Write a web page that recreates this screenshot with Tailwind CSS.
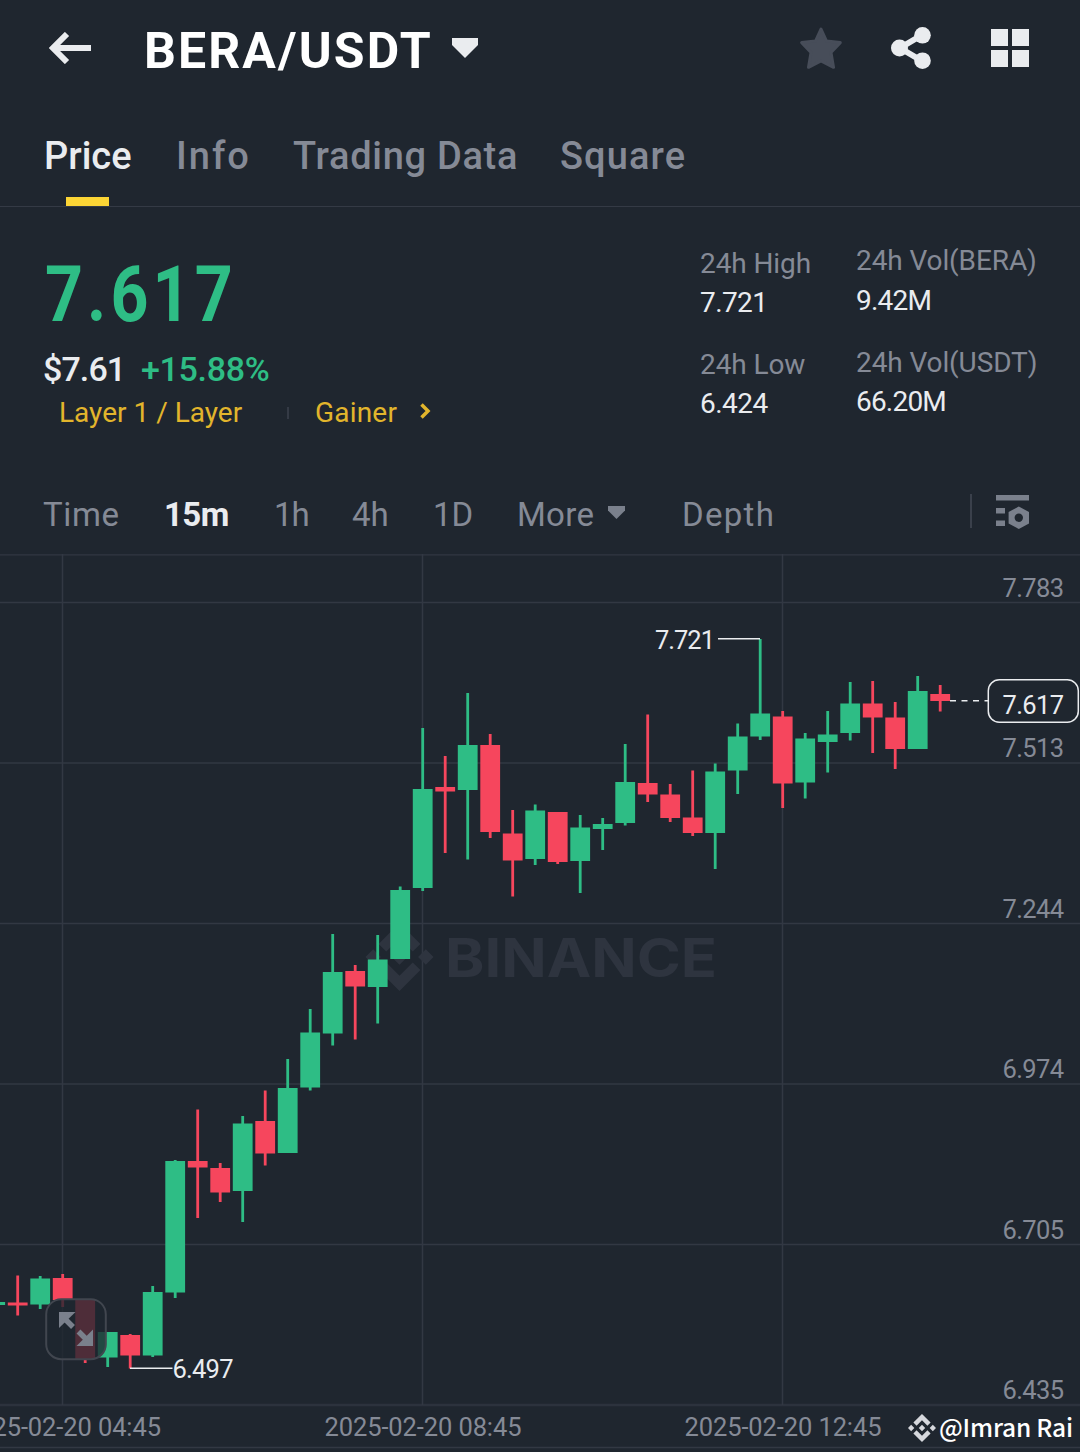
<!DOCTYPE html>
<html lang="en">
<head>
    <meta charset="UTF-8">
    <meta name="viewport" content="width=device-width, initial-scale=1.0">
    <title>BERA/USDT</title>
    <script src="https://cdn.jsdelivr.net/npm/@tailwindcss/browser@4"></script>
</head>
<body class="bg-[#1f262f] text-[#eaecef] font-['Roboto',sans-serif] w-[1080px] h-[1452px] overflow-hidden">

    <!-- Header -->
    <header class="h-24 flex items-center pl-[49px] pr-[51px]">
        <svg class="w-[42px] h-8" viewBox="0 0 42 32" fill="none" stroke="#eaecef" stroke-width="6">
            <path d="M18 2L4 16l14 14M4 16h38"/>
        </svg>
        <h1 class="ml-[53px] mt-1.5 w-[308px] text-[50px] leading-none font-bold text-white tracking-[2.1px] whitespace-nowrap">BERA/USDT</h1>
        <svg class="w-[26px] h-5" viewBox="0 0 26 20" fill="#eaecef">
            <path d="M0 0h26v7L13 20 0 7z"/>
        </svg>
        <div class="ml-auto flex items-center">
            <svg class="w-[42px] h-[42px]" viewBox="0 0 42 42" fill="#474d59" stroke="#474d59" stroke-width="3" stroke-linejoin="round">
                <path d="M21 2l5.500 12L40.300 15.600 31 25.500 33.500 40.300 21 34 8.500 40.300 11 25.500 1.700 15.600 15.500 14z"/>
            </svg>
            <svg class="ml-[49px] w-10 h-[42px]" viewBox="0 0 40 42" fill="#eaecef">
                <path d="M31 8L9 21l22 13" fill="none" stroke="#eaecef" stroke-width="6"/>
                <circle cx="8.500" cy="21" r="8.500"/>
                <circle cx="31.500" cy="8.300" r="8.300"/>
                <circle cx="31.500" cy="33.700" r="8.300"/>
            </svg>
            <svg class="ml-[60px] w-[38px] h-[38px]" viewBox="0 0 38 38" fill="#eaecef">
                <path d="M0 0h17v17H0zM21 0h17v17H21zM0 21h17v17H0zM21 21h17v17H21z"/>
            </svg>
        </div>
    </header>

    <!-- Tabs -->
    <nav class="h-[111px] border-b border-[#343a45] pl-11 pt-[39px] grid grid-cols-[132px_117px_267px_1fr] text-[38px] leading-[42px] font-medium text-[#858a96] whitespace-nowrap">
        <div class="text-[#eaecef] relative">
            <span>Price</span>
            <i class="absolute left-[22px] top-[62px] w-[43px] h-[9px] bg-[#fcd535]"></i>
        </div>
        <div class="tracking-[2px]">Info</div>
        <div class="tracking-[0.7px]">Trading Data</div>
        <div class="tracking-[1.1px]">Square</div>
    </nav>

    <!-- Last price and 24h stats -->
    <section class="h-[267px] flex pl-[43px] whitespace-nowrap">
        <div class="w-[657px] pt-[49px]">
            <div class="ml-0.5 h-[78px] leading-[78px] text-[77px] font-bold text-[#2ebd85] tracking-[4.8px] origin-left scale-x-[.86]">7.617</div>
            <div class="mt-[15px] h-10 leading-10 text-[34px] font-medium flex">
                <span class="w-[98px] tracking-[-0.9px]">$7.61</span>
                <span class="tracking-[-0.3px] text-[#2ebd85]">+15.88%</span>
            </div>
            <div class="mt-1 h-10 leading-10 text-[28px] text-[#e2b52c] flex items-center pl-4">
                <span class="w-[228px]">Layer 1 / Layer</span>
                <i class="w-0.5 h-3 bg-[#343a45]"></i>
                <span class="ml-[26px] w-[105px] tracking-[0.2px]">Gainer</span>
                <svg class="w-[11px] h-4 -mt-1" viewBox="0 0 11 16" fill="none" stroke="#e2b52c" stroke-width="3.500">
                    <path d="M1.500 1.500L8 8l-6.500 6.500"/>
                </svg>
            </div>
        </div>
        <dl class="w-[156px] pt-[37px] text-[28px] leading-10">
            <dt class="text-[#858a96] tracking-[-0.1px]">24h High</dt>
            <dd class="-mt-px tracking-[-0.6px]">7.721</dd>
            <dt class="mt-[22px] text-[#858a96] tracking-[-0.1px]">24h Low</dt>
            <dd class="-mt-px tracking-[-0.5px]">6.424</dd>
        </dl>
        <dl class="pt-[34px] text-[28px] leading-10">
            <dt class="text-[#858a96] tracking-[-0.1px]">24h Vol(BERA)</dt>
            <dd class="tracking-[-0.8px]">9.42M</dd>
            <dt class="mt-[22px] text-[#858a96] tracking-[-0.1px]">24h Vol(USDT)</dt>
            <dd class="-mt-px tracking-[-0.8px]">66.20M</dd>
        </dl>
    </section>

    <!-- Intervals -->
    <nav class="h-20 pl-[43px] flex items-center text-[33px] text-[#858a96] whitespace-nowrap">
        <span class="w-[121px] mt-0.5 tracking-[0.6px]">Time</span>
        <span class="w-[110px] mt-0.5 tracking-[-0.6px] font-bold text-[#eaecef]">15m</span>
        <span class="w-[78px] mt-0.5 tracking-[-1px]">1h</span>
        <span class="w-[81px] mt-0.5">4h</span>
        <span class="w-[84px] mt-0.5">1D</span>
        <span class="w-[91px] mt-0.5 tracking-[0.3px]">More</span>
        <svg class="w-[17px] h-[13px] -mt-1" viewBox="0 0 17 13" fill="#7a808c">
            <path d="M0 0h17v4.500L8.500 13 0 4.500z"/>
        </svg>
        <span class="ml-[57px] mt-0.5 tracking-[1.3px]">Depth</span>
        <i class="ml-auto w-0.5 h-[34px] -mt-1.5 bg-[#3a404b]"></i>
        <svg class="ml-6 mr-[51px] -mt-1 w-[33px] h-[34px]" viewBox="0 0 33 34" fill="#7a808c">
            <path d="M0 0h33v5.500H0zM0 13h9v5.500H0zM0 25.500h9V31H0z"/>
            <path fill-rule="evenodd" d="M22.800 11.500l10.200 5.500v11.500L22.800 34 12.600 28.500V17zM22.800 18.500a4.200 4.200 0 100 8.400 4.200 4.200 0 000-8.400z"/>
        </svg>
    </nav>

    <!-- Chart, y coordinates are page pixels -->
    <main class="relative h-[898px]">
        <svg class="block w-[1080px] h-[898px]" viewBox="0 554 1080 898">
            <defs>
                <g id="logo">
                    <path d="M38.730 53.200l24.590-24.580 24.600 24.600 14.300-14.310L63.320 0 24.420 38.900zM0 63.310l14.300-14.310 14.310 14.310-14.310 14.300zM38.730 73.410L63.320 98l24.600-24.600 14.310 14.290-38.910 38.910-38.910-38.880zM98 63.310l14.300-14.310 14.310 14.300-14.310 14.320zM77.830 63.300L63.320 48.780 48.810 63.280 63.320 77.800z"/>
                </g>
            </defs>
            <g stroke="#323843" stroke-width="1.500">
                <path d="M0 554.500H1080M0 1405H1080" stroke-width="2.500" stroke="#2c323d"/>
                <path d="M0 602.500H1080M0 763H1080M0 923.500H1080M0 1084H1080M0 1244.500H1080M0 1447.500H1080"/>
                <path d="M62.500 554V1405M422.500 554V1405M782.500 554V1405"/>
            </g>
            <g fill="#2e343f">
                <use href="#logo" transform="translate(365.500 923) scale(.537)"/>
                <text x="445" y="976.500" font-family="Inter, sans-serif" font-weight="700" font-size="53.500" textLength="272" lengthAdjust="spacingAndGlyphs">BINANCE</text>
            </g>
            <g id="candles"></g>
            <g fill="none" stroke="#eaecef" stroke-width="1.500">
                <path d="M718 638.700H760M130 1368.300H172.500"/>
                <path d="M950 700.700H988" stroke-dasharray="6 5.500"/>
                <rect x="988.300" y="679.700" width="90" height="42.600" rx="11" fill="#1f262f"/>
            </g>
            <g font-size="25.500" fill="#eaecef">
                <text x="655" y="649.300" textLength="60">7.721</text>
                <text x="172.500" y="1378.300" textLength="61">6.497</text>
                <text x="1002.500" y="714.300" textLength="61.500">7.617</text>
            </g>
            <g font-size="25.500" fill="#858a96">
                <text x="1002.500" y="597.300" textLength="61.500">7.783</text>
                <text x="1002.500" y="757.300" textLength="61.500">7.513</text>
                <text x="1002.500" y="918.300" textLength="61.500">7.244</text>
                <text x="1002.500" y="1078.300" textLength="61.500">6.974</text>
                <text x="1002.500" y="1239.300" textLength="61.500">6.705</text>
                <text x="1002.500" y="1399.300" textLength="61.500">6.435</text>
                <text x="-36" y="1436.300" textLength="197">2025-02-20 04:45</text>
                <text x="324.500" y="1436.300" textLength="197">2025-02-20 08:45</text>
                <text x="684.500" y="1436.300" textLength="197">2025-02-20 12:45</text>
            </g>
            <!-- Fullscreen button -->
            <rect x="46.200" y="1299.200" width="59.600" height="60" rx="15" fill="#1f262f" fill-opacity=".78" stroke="#41464f" stroke-width="2"/>
            <g fill="#7a808c" stroke="#7a808c">
                <path d="M59 1312h16.500L59 1328z" stroke="none"/>
                <path d="M93 1346H76.500L93 1329.500z" stroke="none"/>
                <path d="M64 1318l9 9M88 1341l-9.500-9.500" stroke-width="5.500"/>
            </g>
            <!-- Author mark -->
            <use href="#logo" transform="translate(908 1414) scale(.221)" fill="#d6d8dd"/>
            <text x="939" y="1437" font-family="Noto Sans CJK SC, sans-serif" font-weight="500" font-size="24.500" fill="#fff" textLength="134">@Imran Rai</text>
        </svg>
    </main>

    <script>
        // [high, low, body top, body bottom, up]
        const candles = [
            [1302, 1305, 1302, 1305, 1],
            [1275.5, 1315.5, 1302.5, 1305.5, 0],
            [1276, 1309, 1278.5, 1304.5, 1],
            [1274, 1307, 1278, 1300, 0],
            [1299, 1363, 1299, 1359, 0],
            [1332, 1367, 1332, 1357.5, 1],
            [1334, 1368.5, 1335, 1355.5, 0],
            [1286, 1357, 1292, 1355.5, 1],
            [1160, 1298, 1161, 1292.5, 1],
            [1109.5, 1218, 1161, 1167.5, 0],
            [1163, 1202, 1168, 1192.5, 0],
            [1116, 1222, 1123.5, 1191, 1],
            [1090.5, 1165.5, 1121, 1153.5, 0],
            [1059, 1153, 1088, 1153, 1],
            [1009, 1090.5, 1032.5, 1087.5, 1],
            [934, 1045.5, 972, 1033.5, 1],
            [965, 1039.5, 971, 986.5, 0],
            [935, 1023.5, 959.5, 987, 1],
            [886.5, 959, 890, 959, 1],
            [728, 891, 789, 888, 1],
            [756, 853, 787, 791.5, 0],
            [693, 859.5, 745, 790, 1],
            [734, 838, 745, 832, 0],
            [810, 896.5, 833.5, 860.5, 0],
            [804.5, 865, 810.5, 859, 1],
            [812, 864, 812, 862, 0],
            [815, 893, 827.5, 861, 1],
            [818, 850, 824, 829, 1],
            [744, 825.5, 782, 823, 1],
            [714.5, 802, 783, 794.5, 0],
            [784, 822, 794.5, 818, 0],
            [770.5, 836, 817.5, 833, 0],
            [763.5, 869, 771.5, 833, 1],
            [723.5, 794, 736.5, 770.5, 1],
            [639, 740, 713.5, 736.5, 1],
            [711, 808, 716.5, 783.5, 0],
            [733, 798.5, 738.5, 782.5, 1],
            [711, 772.5, 734.5, 742, 1],
            [682, 740.5, 703.5, 733, 1],
            [681, 753, 703.5, 717.5, 0],
            [702, 769, 717.5, 749, 0],
            [676, 749, 691, 749, 1],
            [685, 711.5, 694, 701, 0]
        ];

        let out = '';
        candles.forEach(([high, low, top, bottom, up], i) => {
            const x = -5 + i * 22.5;
            const color = up ? '#2ebd85' : '#f6465d';
            out += `<rect x="${x - 1.2}" y="${high}" width="2.8" height="${low - high}" fill="${color}"/>`;
            out += `<rect x="${x - 9.7}" y="${top}" width="19.8" height="${bottom - top}" fill="${color}"/>`;
        });
        document.getElementById('candles').innerHTML = out;
    </script>
</body>
</html>
